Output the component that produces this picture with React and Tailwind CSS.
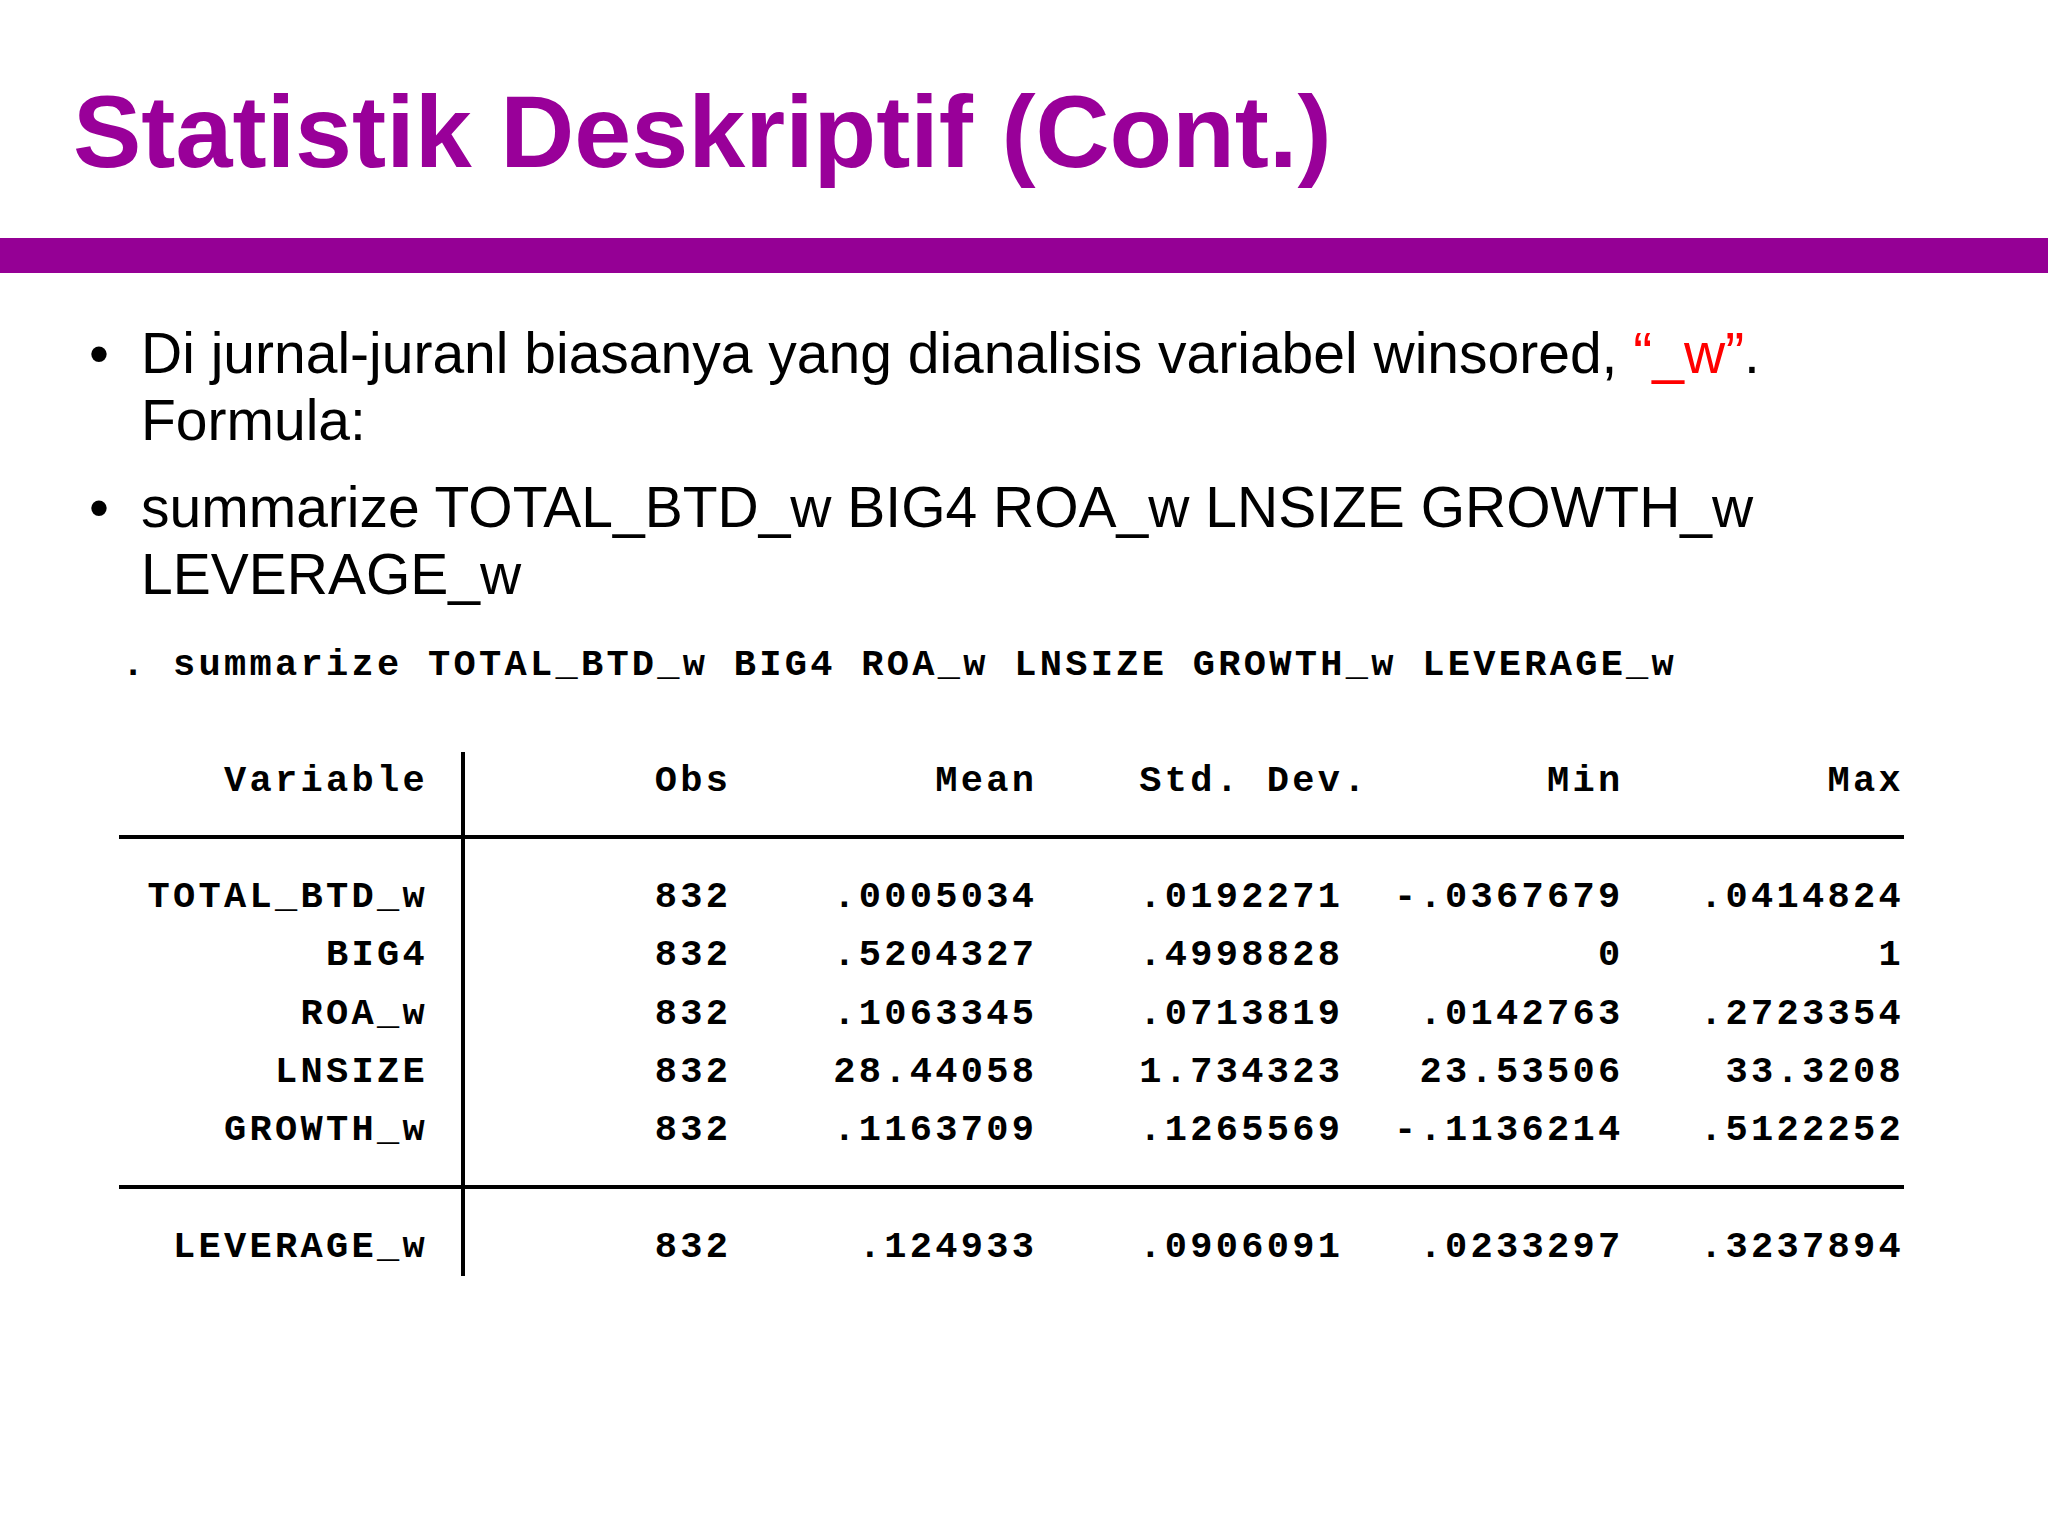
import React from "react";

const mono = "font-['Liberation_Mono','Courier_New',monospace] font-bold text-[37px] tracking-[3.29px] whitespace-pre text-black";

const rows = [
  ["TOTAL_BTD_w", "       832    .0005034    .0192271  -.0367679   .0414824"],
  ["       BIG4", "       832    .5204327    .4998828          0          1"],
  ["      ROA_w", "       832    .1063345    .0713819   .0142763   .2723354"],
  ["     LNSIZE", "       832    28.44058    1.734323   23.53506    33.3208"],
  ["   GROWTH_w", "       832    .1163709    .1265569  -.1136214   .5122252"],
];

function Section({ children, left, pad = "" }) {
  return (
    <div className="flex">
      <div className={"w-[345px] pl-[3px] " + pad}>{left}</div>
      <div className="w-[4px] bg-black" />
      <div className={"pl-[11px] " + pad}>{children}</div>
    </div>
  );
}

export default function App() {
  return (
    <div className="w-[2048px] h-[1536px] bg-white overflow-hidden font-['Liberation_Sans',Arial,sans-serif]">
      <h1 className="pt-[80px] pl-[73px] text-[102.5px] font-bold leading-[103px] text-[#990099]">
        Statistik Deskriptif (Cont.)
      </h1>
      <div className="mt-[55px] h-[35px] bg-[#950095]" />

      <ul className="mt-[47px] pl-[89px] text-[57px] leading-[67px] text-black">
        <li className="flex">
          <span className="w-[52px] shrink-0">•</span>
          <span>
            Di jurnal-juranl biasanya yang dianalisis variabel winsored,{" "}
            <span className="text-[#ff0000]">“_w”</span>.
            <br />
            Formula:
          </span>
        </li>
        <li className="flex mt-[20px]">
          <span className="w-[52px] shrink-0">•</span>
          <span>
            summarize TOTAL_BTD_w BIG4 ROA_w LNSIZE GROWTH_w
            <br />
            LEVERAGE_w
          </span>
        </li>
      </ul>

      <div className={mono + " mt-[35px] pl-[122px] leading-[44px]"}>
        . summarize TOTAL_BTD_w BIG4 ROA_w LNSIZE GROWTH_w LEVERAGE_w
      </div>

      <div className={mono + " mt-[65px] ml-[119px] w-[1785px]"}>
        <Section
          pad="h-[83px]"
          left={<div className="leading-[58px]">{"    Variable "}</div>}
        >
          <div className="leading-[58px]">{"       Obs        Mean    Std. Dev.       Min        Max"}</div>
        </Section>
        <div className="h-[4px] bg-black" />
        <Section
          pad="pt-[29px] pb-[26px]"
          left={
            <div>
              {rows.map((r) => (
                <div key={r[0]} className="leading-[58.25px]">{" " + r[0] + " "}</div>
              ))}
            </div>
          }
        >
          {rows.map((r) => (
            <div key={r[0]} className="leading-[58.25px]">{r[1]}</div>
          ))}
        </Section>
        <div className="h-[4px] bg-black" />
        <Section
          pad="pt-[29px]"
          left={<div className="leading-[58px]">{"  LEVERAGE_w "}</div>}
        >
          <div className="leading-[58px]">{"       832     .124933    .0906091   .0233297   .3237894"}</div>
        </Section>
      </div>
    </div>
  );
}
